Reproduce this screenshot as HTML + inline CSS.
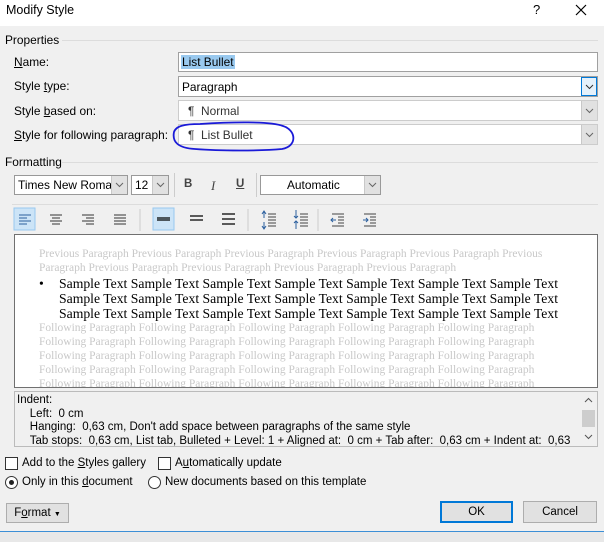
<!DOCTYPE html>
<html><head><meta charset="utf-8"><style>
*{box-sizing:border-box;margin:0;padding:0}
body{width:604px;height:542px;background:#f0f0f0;font-family:"Liberation Sans",sans-serif;font-size:11.5px;color:#000;position:relative;overflow:hidden}
.a{position:absolute;white-space:nowrap}
.lb{font-size:11.9px}
.box{position:absolute;background:#fff;border:1px solid #a0a0a0}
.dd{position:absolute;top:0;right:0;width:16px;height:100%;background:#e1e1e1;border-left:1px solid #c8c8c8;display:flex;align-items:center;justify-content:center}
.ser{font-family:"Liberation Serif",serif}
.g{color:#c8c8c8;font-size:11.5px;line-height:14px}
.btn{position:absolute;background:#e1e1e1;border:1px solid #adadad;text-align:center}
.cb{position:absolute;width:13px;height:13px;border:1px solid #333;background:#fff}
.rd{position:absolute;width:13px;height:13px;border:1px solid #333;border-radius:50%;background:#fff}
u{text-decoration:underline}
</style></head><body>
<div class="a" style="left:0;top:0;width:604px;height:26px;background:#fff"></div>
<div class="a" style="left:6px;top:3px;font-size:12.5px">Modify Style</div>
<div class="a" style="left:533px;top:2px;font-size:13px">?</div>
<svg class="a" style="left:575px;top:4px" width="12" height="12"><path d="M1 1L11 11M11 1L1 11" stroke="#000" stroke-width="1.2"/></svg>

<div class="a lb" style="left:5px;top:33px">Properties</div>
<div class="a" style="left:62px;top:40px;width:536px;height:1px;background:#dcdcdc"></div>
<div class="a lb" style="left:14px;top:55px"><u>N</u>ame:</div>
<div class="box" style="left:178px;top:52px;width:420px;height:20px"><span class="a lb" style="left:2px;top:2px;background:#99c9ef;padding:0 1px">List Bullet</span></div>
<div class="a lb" style="left:14px;top:79px">Style <u>t</u>ype:</div>
<div class="box" style="left:178px;top:76px;width:420px;height:21px"><span class="a lb" style="left:3px;top:3px">Paragraph</span><div class="dd" style="background:#e5f1fb;border:1px solid #0078d7"><svg width="9" height="6"><path d="M1 1L4.5 4.5L8 1" stroke="#333" fill="none"/></svg></div></div>
<div class="a lb" style="left:14px;top:104px">Style <u>b</u>ased on:</div>
<div class="box" style="left:178px;top:100px;width:420px;height:21px;border-color:#ccc"><span class="a lb" style="left:9px;top:3px;color:#333">¶&nbsp; Normal</span><div class="dd"><svg width="9" height="6"><path d="M1 1L4.5 4.5L8 1" stroke="#666" fill="none"/></svg></div></div>
<div class="a lb" style="left:14px;top:128px"><u>S</u>tyle for following paragraph:</div>
<div class="box" style="left:178px;top:124px;width:420px;height:21px;border-color:#ccc"><span class="a lb" style="left:9px;top:3px;color:#333">¶&nbsp; List Bullet</span><div class="dd"><svg width="9" height="6"><path d="M1 1L4.5 4.5L8 1" stroke="#666" fill="none"/></svg></div></div>
<svg class="a" style="left:170px;top:120px" width="130" height="36"><path d="M30 4C60 2 100 1 113 6C126 10 128 26 112 29C90 31 50 31 25 29C8 28 2 22 4 12C6 6 14 4 30 4" stroke="#1a1ad8" stroke-width="1.8" fill="none"/></svg>

<div class="a lb" style="left:5px;top:155px">Formatting</div>
<div class="a" style="left:62px;top:162px;width:536px;height:1px;background:#dcdcdc"></div>
<div class="box" style="left:14px;top:175px;width:114px;height:20px;border-color:#999"><span class="a lb" style="left:3px;top:2px">Times New Roman</span><div class="dd"><svg width="9" height="6"><path d="M1 1L4.5 4.5L8 1" stroke="#666" fill="none"/></svg></div></div>
<div class="box" style="left:131px;top:175px;width:38px;height:20px;border-color:#999"><span class="a lb" style="left:3px;top:2px">12</span><div class="dd"><svg width="9" height="6"><path d="M1 1L4.5 4.5L8 1" stroke="#666" fill="none"/></svg></div></div>
<div class="a" style="left:174px;top:173px;width:1px;height:24px;background:#ccc"></div>
<div class="a" style="left:184px;top:178px;font-weight:bold;color:#444">B</div>
<div class="a" style="left:211px;top:178px;font-style:italic;color:#444;font-family:'Liberation Serif',serif;font-size:13px">I</div>
<div class="a" style="left:236px;top:178px;color:#444;text-decoration:underline;font-weight:bold">U</div>
<div class="a" style="left:256px;top:173px;width:1px;height:24px;background:#ccc"></div>
<div class="box" style="left:260px;top:175px;width:121px;height:20px;border-color:#999"><span class="a lb" style="left:26px;top:2px">Automatic</span><div class="dd" style="width:16px"><svg width="9" height="6"><path d="M1 1L4.5 4.5L8 1" stroke="#666" fill="none"/></svg></div></div>
<div class="a" style="left:12px;top:204px;width:586px;height:1px;background:#dcdcdc"></div>

<svg class="a" style="left:12px;top:207px" width="380" height="26">
<rect x="2" y="1" width="21" height="22" fill="#cce4f7" stroke="#99c9ef"/>
<g stroke="#333" stroke-width="1">
<path d="M7 8h12M7 11h8M7 14h12M7 17h8" stroke="#2b5f9e"/>
<path d="M38 8h12M40 11h8M38 14h12M40 17h8"/>
<path d="M70 8h12M74 11h8M70 14h12M74 17h8"/>
<path d="M102 8h12M102 11h12M102 14h12M102 17h12"/>
</g>
<path d="M128 2v22" stroke="#ccc"/>
<rect x="141" y="1" width="21" height="22" fill="#cce4f7" stroke="#99c9ef"/>
<path d="M145 11h13M145 13h13" stroke="#000" stroke-width="1.3"/>
<path d="M178 9h13M178 13h13" stroke="#000" stroke-width="1.3"/>
<path d="M210 7h13M210 12h13M210 17h13" stroke="#000" stroke-width="1.3"/>
<path d="M236 2v22" stroke="#ccc"/>
<g stroke="#444"><path d="M256 7h8M256 10h8M256 13h8M256 16h8M256 19h8"/><path d="M252 4v7M250 7l2-3l2 3M252 22v-7M250 19l2 3l2-3" stroke="#2b5f9e" fill="none"/>
<path d="M288 7h8M288 10h8M288 13h8M288 16h8M288 19h8"/><path d="M284 3v8M282 9l2 2l2-2M284 22v-8M282 16l2-2l2 2" stroke="#2b5f9e" fill="none"/></g>
<path d="M306 2v22" stroke="#ccc"/>
<g stroke="#444"><path d="M320 7h12M326 10h6M326 13h6M326 16h6M320 19h12"/><path d="M324 13h-5M321 11l-2 2l2 2" stroke="#2b5f9e" fill="none"/>
<path d="M352 7h12M358 10h6M358 13h6M358 16h6M352 19h12"/><path d="M351 13h5M354 11l2 2l-2 2" stroke="#2b5f9e" fill="none"/></g>
</svg>

<div class="box" style="left:14px;top:234px;width:584px;height:154px;border-color:#707070;overflow:hidden">
<div class="a ser g" style="left:24px;top:12px">Previous Paragraph Previous Paragraph Previous Paragraph Previous Paragraph Previous Paragraph Previous<br>Paragraph Previous Paragraph Previous Paragraph Previous Paragraph Previous Paragraph</div>
<div class="a ser" style="left:24px;top:41px;font-size:13.7px;line-height:15px">•</div>
<div class="a ser" style="left:44px;top:41px;font-size:13.7px;line-height:15px">Sample Text Sample Text Sample Text Sample Text Sample Text Sample Text Sample Text<br>Sample Text Sample Text Sample Text Sample Text Sample Text Sample Text Sample Text<br>Sample Text Sample Text Sample Text Sample Text Sample Text Sample Text Sample Text</div>
<div class="a ser g" style="left:24px;top:86px">Following Paragraph Following Paragraph Following Paragraph Following Paragraph Following Paragraph<br>Following Paragraph Following Paragraph Following Paragraph Following Paragraph Following Paragraph<br>Following Paragraph Following Paragraph Following Paragraph Following Paragraph Following Paragraph<br>Following Paragraph Following Paragraph Following Paragraph Following Paragraph Following Paragraph<br>Following Paragraph Following Paragraph Following Paragraph Following Paragraph Following Paragraph</div>
</div>

<div class="box" style="left:14px;top:391px;width:584px;height:56px;background:#f0f0f0;border-color:#bbb">
<div class="a" style="left:2px;top:2px;line-height:13.5px">Indent:<br>&nbsp;&nbsp;&nbsp;&nbsp;Left:&nbsp; 0 cm<br>&nbsp;&nbsp;&nbsp;&nbsp;Hanging:&nbsp; 0,63 cm, Don't add space between paragraphs of the same style<br>&nbsp;&nbsp;&nbsp;&nbsp;Tab stops:&nbsp; 0,63 cm, List tab, Bulleted + Level: 1 + Aligned at:&nbsp; 0 cm + Tab after:&nbsp; 0,63 cm + Indent at:&nbsp; 0,63</div>
<div class="a" style="right:0;top:0;width:17px;height:54px;background:#f0f0f0"></div>
<div class="a" style="right:2px;top:18px;width:13px;height:17px;background:#cdcdcd"></div>
<svg class="a" style="right:4px;top:5px" width="9" height="6"><path d="M1 5L4.5 1.5L8 5" stroke="#555" fill="none"/></svg>
<svg class="a" style="right:4px;top:42px" width="9" height="6"><path d="M1 1L4.5 4.5L8 1" stroke="#555" fill="none"/></svg>
</div>

<div class="cb" style="left:5px;top:457px"></div>
<div class="a" style="left:22px;top:457px">Add to the <u>S</u>tyles gallery</div>
<div class="cb" style="left:158px;top:457px"></div>
<div class="a" style="left:175px;top:457px">A<u>u</u>tomatically update</div>
<div class="rd" style="left:5px;top:476px"><div class="a" style="left:3px;top:3px;width:5px;height:5px;border-radius:50%;background:#222"></div></div>
<div class="a" style="left:22px;top:476px">Only in this <u>d</u>ocument</div>
<div class="rd" style="left:148px;top:476px"></div>
<div class="a" style="left:165px;top:476px">New documents based on this template</div>

<div class="btn" style="left:6px;top:503px;width:63px;height:20px;padding-top:3px">F<u>o</u>rmat <span style="font-size:7px">▼</span></div>
<div class="btn" style="left:440px;top:501px;width:73px;height:22px;border:2px solid #0078d7;padding-top:3px">OK</div>
<div class="btn" style="left:523px;top:501px;width:74px;height:22px;padding-top:4px">Cancel</div>
<div class="a" style="left:0;top:531px;width:604px;height:1px;background:#3c8fd6"></div>
<div class="a" style="left:0;top:532px;width:604px;height:10px;background:#e8e8e8"></div>
</body></html>
